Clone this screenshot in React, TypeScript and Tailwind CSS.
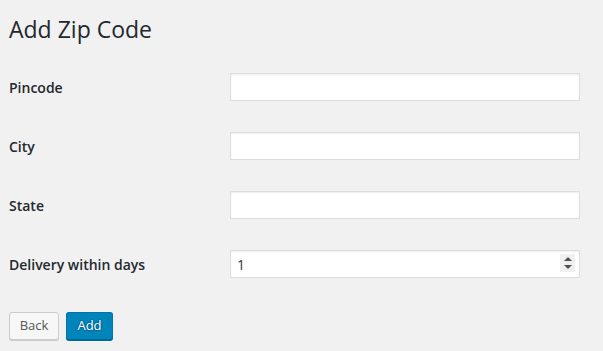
const FIELDS = [
  { label: 'Pincode', value: '' },
  { label: 'City', value: '' },
  { label: 'State', value: '' },
]

const inputCls =
  'h-[28px] w-[350px] border border-[#ddd] bg-white px-[6px] text-[14px] text-[#32373c] shadow-[inset_0_1px_2px_rgba(0,0,0,0.07)] outline-none'

function Row({ label, children }: { label: string; children: React.ReactNode }) {
  return (
    <div className="flex items-center pt-[16px] pb-[15px]">
      <label className="w-[221px] text-[14px] font-semibold text-[#23282d]">{label}</label>
      {children}
    </div>
  )
}

export default function App() {
  return (
    <div
      className="h-[351px] w-[603px] overflow-hidden bg-[#f1f1f1] pl-[9px]"
      style={{ fontFamily: '"Open Sans", sans-serif' }}
    >
      <h1 className="pt-[15px] text-[23px] leading-[29px] font-normal text-[#23282d]">Add Zip Code</h1>
      <div className="mt-[13px]">
        {FIELDS.map((f) => (
          <Row key={f.label} label={f.label}>
            <input type="text" readOnly value={f.value} className={inputCls} />
          </Row>
        ))}
        <Row label="Delivery within days">
          <div className="relative">
            <input type="text" readOnly value="1" className={inputCls} />
            {/* spin buttons */}
            <div className="absolute top-[4px] right-[5px] flex h-[18px] w-[15px] flex-col items-center justify-center gap-[4px] bg-[#f0f0f0]">
              <div className="h-0 w-0 border-x-[4px] border-b-[4px] border-x-transparent border-b-[#505050]" />
              <div className="h-0 w-0 border-x-[4px] border-t-[4px] border-x-transparent border-t-[#505050]" />
            </div>
          </div>
        </Row>
      </div>
      <div className="mt-[19px] flex gap-[7px]">
        <button className="h-[28px] w-[50px] rounded-[3px] border border-[#ccc] bg-[#f7f7f7] text-[13px] text-[#555] shadow-[0_1px_0_#ccc]">
          Back
        </button>
        <button className="h-[28px] w-[47px] rounded-[3px] border border-[#0073aa] border-b-[#006799] bg-[#0085ba] text-[13px] text-white shadow-[0_1px_0_#006799] [text-shadow:0_-1px_1px_#006799,1px_0_1px_#006799,0_1px_1px_#006799,-1px_0_1px_#006799]">
          Add
        </button>
      </div>
    </div>
  )
}
